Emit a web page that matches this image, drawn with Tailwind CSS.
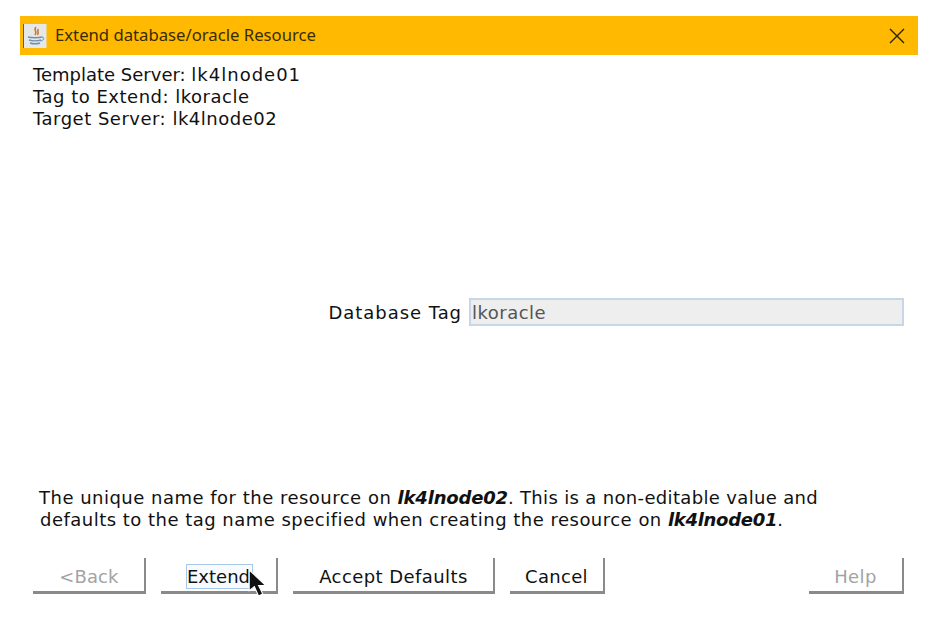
<!DOCTYPE html>
<html lang="en">

<head>
    <meta charset="UTF-8">
    <title>Extend database/oracle Resource</title>
    <script src="https://cdn.jsdelivr.net/npm/@tailwindcss/browser@4"></script>
</head>

<body class="bg-white h-[627px] w-[933px] overflow-hidden pt-4 pl-5 font-['DejaVu_Sans',sans-serif] text-[18px] text-[#111111]">
    <div class="w-[898px]">
        <!-- title bar -->
        <div class="h-[39px] bg-[#ffb900] flex items-center pl-[3px] pr-[13px]">
            <svg class="w-[24px] h-[26px] shrink-0" viewBox="0 0 24 26">
                <rect x="0.5" y="1" width="23" height="24" fill="#e4e8e6" />
                <path d="M0.5 1v24" stroke="#6b5a2a" stroke-width="1" />
                <path d="M13 4c-3 3 2 4-1 8M15.5 6c-2 2 1 3-1 6" fill="none" stroke="#d8702a" stroke-width="1.6" />
                <path d="M5 14c3 1 11 1 14 0M6 17c3 1 9 1 12 0M7 20c3 1 7 1 10 0" fill="none" stroke="#6f8fb3" stroke-width="1.5" />
                <path d="M19 14c3 0 2 4-2 4" fill="none" stroke="#6f8fb3" stroke-width="1" />
            </svg>
            <span class="ml-2 -mt-[2px] font-['Noto_Sans',sans-serif] text-[16.7px] text-[#3a2c00]">Extend database/oracle Resource</span>
            <svg class="ml-auto w-4 h-4" viewBox="0 0 16 16">
                <path d="M1 1l14 14M15 1L1 15" stroke="#2b2100" stroke-width="1.4" fill="none" />
            </svg>
        </div>

        <!-- server info -->
        <div class="pl-[13px] pt-[9px] leading-[22px]">
            <div>Template Server: <span class="tracking-[1px]">lk4lnode01</span></div>
            <div class="tracking-[0.5px]">Tag to Extend: lkoracle</div>
            <div class="tracking-[0.5px]">Target Server: lk4lnode02</div>
        </div>

        <!-- database tag field -->
        <div class="mt-[168px] flex items-center justify-end pr-[14px]">
            <label class="mr-[7px] tracking-[0.95px]">Database Tag</label>
            <div class="w-[435px] h-[28px] bg-[#eeeeee] border-2 border-[#c6d8e8] pl-[1px] leading-[26px] text-[#555555] tracking-[0.5px]">lkoracle</div>
        </div>

        <!-- help text -->
        <div class="mt-[161px] pl-[19px] leading-[22px]">
            <div class="tracking-[0.49px]">The unique name for the resource on <b class="italic tracking-[-0.18px]">lk4lnode02</b><span class="tracking-[0.34px]">. This is a non-editable value and</span></div>
            <div class="tracking-[0.48px] pl-[1px]">defaults to the tag name specified when creating the resource on <b class="italic tracking-[-0.3px]">lk4lnode01</b>.</div>
        </div>

        <!-- buttons -->
        <div class="mt-[27px] flex pl-[13px] pr-[14px] relative">
            <button class="w-[113px] h-[36px] pt-[4px] border-r-2 border-b-[3px] border-[#8a8a8a] text-[#a3a3a3] pl-[1px] tracking-[0.1px]">&lt;Back</button>
            <button class="ml-[15px] w-[117px] h-[36px] border-r-2 border-b-[3px] border-[#8a8a8a] flex items-center justify-center">
                <span class="border border-[#a9c8e6] bg-[#f7fbff] h-[25px] leading-[23px] w-[67px] ml-[2px] text-left overflow-hidden mt-[3px]">Extend</span>
            </button>
            <button class="ml-[15px] w-[202px] h-[36px] pt-[4px] pl-[1px] border-r-2 border-b-[3px] border-[#8a8a8a] tracking-[0.43px]">Accept Defaults</button>
            <button class="ml-[15px] w-[95px] h-[36px] pt-[4px] border-r-2 border-b-[3px] border-[#8a8a8a] tracking-[0.3px]">Cancel</button>
            <button class="ml-auto w-[95px] h-[36px] pt-[4px] border-r-2 border-b-[3px] border-[#8a8a8a] text-[#a3a3a3] tracking-[0.4px]">Help</button>
            <!-- mouse pointer -->
            <svg class="absolute left-[228px] top-[11px] w-[19px] h-[29px]" viewBox="0 0 18 28">
                <path d="M1 1v20l5-4 4 9 4-2-4-8h7z" fill="#111111" stroke="#ffffff" stroke-width="1" />
            </svg>
        </div>
    </div>
</body>

</html>
